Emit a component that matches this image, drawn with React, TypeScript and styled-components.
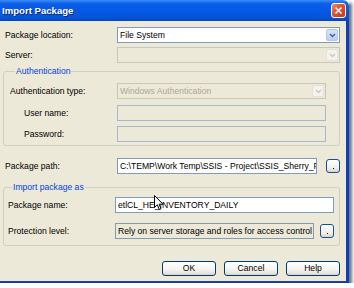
import React from 'react'
import styled, { createGlobalStyle, css } from 'styled-components'

const GlobalStyle = createGlobalStyle`
  html, body {
    margin: 0;
    padding: 0;
    background: #ffffff;
  }
  body {
    font-family: 'Liberation Sans', Arial, sans-serif;
    font-size: 8.6px;
    line-height: 11px;
    color: #000;
  }
`

const Window = styled.div`
  position: relative;
  width: 349px;
  box-shadow: 3px 3px 3px rgba(0, 0, 0, 0.55);
`

const TitleBar = styled.div`
  height: 21px;
  display: flex;
  align-items: center;
  justify-content: space-between;
  padding: 0 3px 0 2px;
  box-sizing: border-box;
  background: linear-gradient(#3d8cf7 0%, #0a5ee8 18%, #0558e4 55%, #0552d6 85%, #0645c0 100%);
  border-top-right-radius: 6px;
`

const Title = styled.span`
  color: #fff;
  font-weight: bold;
  font-size: 9.6px;
  text-shadow: 1px 1px 0 #0a2a7a;
`

const CloseButton = styled.div`
  width: 15px;
  height: 15px;
  box-sizing: border-box;
  border: 1px solid #fff;
  border-radius: 3px;
  background: linear-gradient(135deg, #f0886a 0%, #e2502c 45%, #c83a18 100%);
  display: flex;
  align-items: center;
  justify-content: center;
`

const Body = styled.div`
  background: #ece9d8;
  border-right: 3px solid #0b3fc4;
  border-bottom: 2px solid #1d3f9a;
  padding: 6px 6px 5px 3px;
`

const Row = styled.div<{ $top?: number; $indent?: number }>`
  display: flex;
  align-items: center;
  height: 16px;
  margin-top: ${({ $top }) => $top ?? 0}px;
  padding-left: ${({ $indent }) => $indent ?? 0}px;
`

const Label = styled.div<{ $w: number }>`
  width: ${({ $w }) => $w}px;
  flex: none;
  white-space: nowrap;
`

const fieldBase = css`
  height: 16px;
  box-sizing: border-box;
  display: flex;
  align-items: center;
  overflow: hidden;
  white-space: nowrap;
  padding-left: 2px;
`

const Combo = styled.div<{ $disabled?: boolean }>`
  ${fieldBase};
  flex: 1;
  padding-right: 1px;
  border: 1px solid ${({ $disabled }) => ($disabled ? '#c9c7ba' : '#7f9db9')};
  background: ${({ $disabled }) => ($disabled ? '#ece9d8' : '#fff')};
  color: ${({ $disabled }) => ($disabled ? '#aca899' : '#000')};
`

const ComboText = styled.span`
  flex: 1;
  overflow: hidden;
`

const DropButton = styled.div<{ $disabled?: boolean }>`
  width: 12px;
  height: 12px;
  flex: none;
  border-radius: 2px;
  display: flex;
  align-items: center;
  justify-content: center;
  box-sizing: border-box;
  ${({ $disabled }) =>
    $disabled
      ? css`
          background: #f4f3ee;
          border: 1px solid #e4e2d8;
        `
      : css`
          background: linear-gradient(#d6e3fe, #b8cdf8);
          border: 1px solid #b3c6f3;
        `}
`

const TextBox = styled.div<{ $w?: number; $readonly?: boolean; $disabled?: boolean }>`
  ${fieldBase};
  ${({ $w }) => ($w ? `width: ${$w}px; flex: none;` : 'flex: 1;')}
  border: 1px solid ${({ $disabled }) => ($disabled ? '#a6b8cb' : '#7f9db9')};
  background: ${({ $readonly, $disabled }) => ($readonly || $disabled ? '#ece9d8' : '#fff')};
`

const FieldText = styled.span`
  display: block;
  overflow: hidden;
  white-space: nowrap;
  text-overflow: clip;
  max-width: 100%;
`

const DotButton = styled.div<{ $gap: number }>`
  width: 14px;
  height: 14px;
  flex: none;
  margin-left: ${({ $gap }) => $gap}px;
  box-sizing: border-box;
  border: 1px solid #1b4f95;
  border-radius: 3px;
  background: linear-gradient(#ffffff, #eeede6 70%, #d8d4c8);
  display: flex;
  align-items: flex-end;
  justify-content: center;
  padding-bottom: 3px;
`

const Dot = styled.span`
  width: 1px;
  height: 1px;
  background: #000;
`

const Group = styled.div<{ $top: number; $pl: number; $pr: number; $pb: number }>`
  margin-top: ${({ $top }) => $top}px;
  border: 1px solid #d0d0bf;
  border-radius: 3px;
  padding: 0 ${({ $pr }) => $pr}px ${({ $pb }) => $pb}px ${({ $pl }) => $pl}px;
`

const Legend = styled.div<{ $left: number }>`
  width: max-content;
  margin-top: -6px;
  margin-left: ${({ $left }) => $left}px;
  padding: 0 1px;
  height: 11px;
  line-height: 11px;
  background: #ece9d8;
  color: #0046d5;
`

const ButtonBar = styled.div`
  display: flex;
  justify-content: flex-end;
  gap: 8px;
  margin-top: 15px;
`

const Button = styled.div`
  width: 54px;
  height: 15px;
  box-sizing: border-box;
  border: 1px solid #003c74;
  border-radius: 3px;
  background: linear-gradient(#ffffff, #f3f3ef 60%, #e3e1d7 90%, #d6d0c5);
  display: flex;
  align-items: center;
  justify-content: center;
`

const Cursor = styled.svg`
  position: absolute;
  left: 154px;
  top: 195px;
`

const Chevron = ({ color }: { color: string }) => (
  <svg width="7" height="5" viewBox="0 0 7 5">
    <path d="M1 1 L3.5 3.5 L6 1" fill="none" stroke={color} strokeWidth="1.4" />
  </svg>
)

export default function App() {
  return (
    <>
      <GlobalStyle />
      <Window>
        <TitleBar>
          <Title>Import Package</Title>
          <CloseButton>
            <svg width="9" height="9" viewBox="0 0 9 9">
              <path d="M1.5 1.5 L7.5 7.5 M7.5 1.5 L1.5 7.5" stroke="#fff" strokeWidth="1.6" />
            </svg>
          </CloseButton>
        </TitleBar>
        <Body>
          <Row $indent={2}>
            <Label $w={112}>Package location:</Label>
            <Combo>
              <ComboText>File System</ComboText>
              <DropButton>
                <Chevron color="#4d6185" />
              </DropButton>
            </Combo>
          </Row>
          <Row $indent={2} $top={4}>
            <Label $w={112}>Server:</Label>
            <Combo $disabled>
              <ComboText />
              <DropButton $disabled>
                <Chevron color="#c9c7ba" />
              </DropButton>
            </Combo>
          </Row>

          <Group $top={8} $pl={6} $pr={13} $pb={3}>
            <Legend $left={5}>Authentication</Legend>
            <Row $top={6}>
              <Label $w={107}>Authentication type:</Label>
              <Combo $disabled>
                <ComboText>Windows Authentication</ComboText>
                <DropButton $disabled>
                  <Chevron color="#c9c7ba" />
                </DropButton>
              </Combo>
            </Row>
            <Row $top={6} $indent={14}>
              <Label $w={93}>User name:</Label>
              <TextBox $disabled />
            </Row>
            <Row $top={5} $indent={14}>
              <Label $w={93}>Password:</Label>
              <TextBox $disabled />
            </Row>
          </Group>

          <Row $indent={2} $top={12}>
            <Label $w={112}>Package path:</Label>
            <TextBox $w={200}>
              <FieldText>C:\TEMP\Work Temp\SSIS - Project\SSIS_Sherry_Pro</FieldText>
            </TextBox>
            <DotButton $gap={9}>
              <Dot />
            </DotButton>
          </Row>

          <Group $top={13} $pl={4} $pr={5} $pb={6}>
            <Legend $left={4}>Import package as</Legend>
            <Row $top={4}>
              <Label $w={107}>Package name:</Label>
              <TextBox>etlCL_HE_INVENTORY_DAILY</TextBox>
            </Row>
            <Row $top={10}>
              <Label $w={107}>Protection level:</Label>
              <TextBox $w={199} $readonly>
                <FieldText>Rely on server storage and roles for access control</FieldText>
              </TextBox>
              <DotButton $gap={6}>
                <Dot />
              </DotButton>
            </Row>
          </Group>

          <ButtonBar>
            <Button>OK</Button>
            <Button>Cancel</Button>
            <Button>Help</Button>
          </ButtonBar>
        </Body>
        <Cursor width="10" height="16" viewBox="0 0 10 16">
          <path
            d="M0.5 0.5 L0.5 12.5 L3.3 9.8 L5.3 14.5 L7 13.8 L5.1 9.2 L9 9.2 Z"
            fill="#fff"
            stroke="#000"
            strokeWidth="1"
            strokeLinejoin="round"
          />
        </Cursor>
      </Window>
    </>
  )
}
